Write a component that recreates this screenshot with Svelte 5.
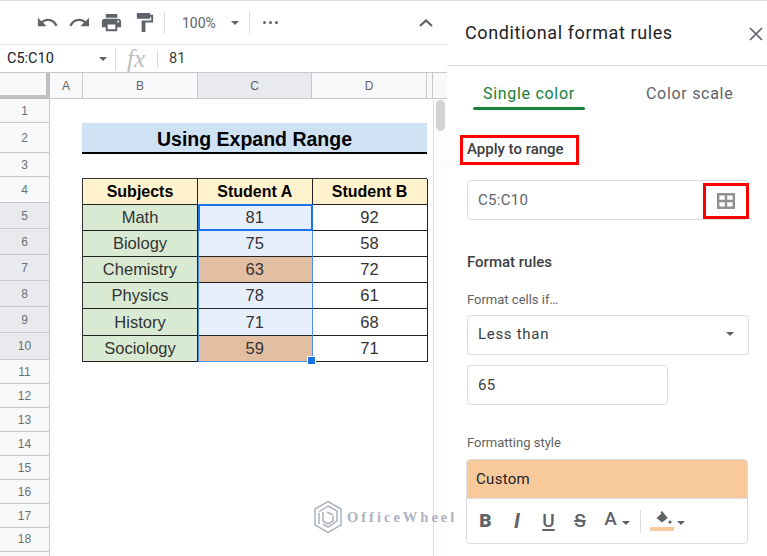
<script>
  const rowHeights = [24, 30, 24, 26, 26, 26, 26, 26, 26, 27, 24, 24, 24, 24, 24, 24, 24, 23.5, 23];
  const rows = [
    { s: 'Math', a: 81, b: 92 },
    { s: 'Biology', a: 75, b: 58 },
    { s: 'Chemistry', a: 63, b: 72, low: true },
    { s: 'Physics', a: 78, b: 61 },
    { s: 'History', a: 71, b: 68 },
    { s: 'Sociology', a: 59, b: 71, low: true }
  ];
  const fmt = ['B', 'I', 'U', 'S'];
</script>

<div class="page">
  <div class="left">
    <div class="toolbar">
      <svg class="ti undo" viewBox="0 0 24 24"><path d="M12.5 8c-2.65 0-5.05.99-6.9 2.6L2 7v9h9l-3.62-3.62c1.39-1.16 3.16-1.88 5.12-1.88 3.54 0 6.55 2.31 7.6 5.5l2.37-.78C21.08 11.03 17.15 8 12.5 8z"/></svg>
      <svg class="ti redo" viewBox="0 0 24 24"><path d="M18.4 10.6C16.55 8.99 14.15 8 11.5 8c-4.65 0-8.58 3.03-9.96 7.22L3.9 16c1.05-3.19 4.05-5.5 7.6-5.5 1.95 0 3.73.72 5.12 1.88L13 16h9V7l-3.6 3.6z"/></svg>
      <svg class="ti print" viewBox="0 0 24 24"><path d="M19 8H5c-1.66 0-3 1.34-3 3v6h4v4h12v-4h4v-6c0-1.66-1.34-3-3-3zm-3 11H8v-5h8v5zm3-7c-.55 0-1-.45-1-1s.45-1 1-1 1 .45 1 1-.45 1-1 1zm-1-9H6v4h12V3z"/></svg>
      <svg class="ti paint" viewBox="0 0 24 24"><path d="M18 4V3c0-.55-.45-1-1-1H5c-.55 0-1 .45-1 1v4c0 .55.45 1 1 1h12c.55 0 1-.45 1-1V6h1v4H9v11c0 .55.45 1 1 1h2c.55 0 1-.45 1-1v-9h8V4h-3z"/></svg>
      <span class="vsep s1"></span>
      <span class="zoomv">100%</span>
      <span class="caret zc"></span>
      <span class="vsep s2"></span>
      <span class="dots"><i></i><i></i><i></i></span>
      <svg class="chev" viewBox="0 0 14 8"><path d="M1 7l6-5.5L13 7" fill="none" stroke="#5f6368" stroke-width="2.2"/></svg>
    </div>

    <div class="fbar">
      <span class="namebox">C5:C10</span>
      <span class="caret nc"></span>
      <span class="vsep f1"></span>
      <span class="fx">fx</span>
      <span class="vsep f2"></span>
      <span class="fval">81</span>
    </div>

    <div class="colhead">
      <div class="corner"></div>
      <div class="ch a">A</div>
      <div class="ch b">B</div>
      <div class="ch c sel">C</div>
      <div class="ch d">D</div>
      <div class="ch e"></div>
    </div>

    <div class="body">
      <div class="rownums">
        {#each rowHeights as h, i}
          <div class="rn" class:sel={i >= 4 && i <= 9} style="height: {h}px">{i < 18 ? i + 1 : ''}</div>
        {/each}
      </div>
      <div class="canvas">
        <div class="title">Using Expand Range</div>
        <div class="table">
          <div class="cell hd">Subjects</div>
          <div class="cell hd">Student A</div>
          <div class="cell hd">Student B</div>
          {#each rows as r, i}
            <div class="cell subj">{r.s}</div>
            <div class="cell val" class:low={r.low} class:active={i === 0}>{r.a}</div>
            <div class="cell">{r.b}</div>
          {/each}
          <div class="range">
            <span class="handle"></span>
          </div>
        </div>
      </div>
      <div class="track"><div class="thumb"></div></div>
    </div>
  </div>

  <aside class="panel">
    <header class="phead">
      <span class="ptitle">Conditional format rules</span>
      <svg class="close" viewBox="0 0 14 14"><path d="M1 1l12 12M13 1L1 13" stroke="#5f6368" stroke-width="1.7" fill="none"/></svg>
    </header>

    <div class="tabs">
      <span class="tab on">Single color</span>
      <span class="tab off">Color scale</span>
    </div>

    <div class="pbody">
      <div class="applybox"><span class="strong">Apply to range</span></div>

      <div class="rangeinput">
        <span class="rv">C5:C10</span>
        <span class="gridbtn">
          <svg viewBox="0 0 18 16" width="18" height="16"><path d="M1.2 1.2h15.6v13.6H1.2zM9 1v14M1 8h16" fill="none" stroke="#8f8f8f" stroke-width="2.4"/></svg>
        </span>
      </div>

      <div class="strong frules">Format rules</div>
      <div class="small fci">Format cells if…</div>
      <div class="sel-input"><span>Less than</span><span class="caret sc"></span></div>
      <div class="num-input">65</div>
      <div class="small fs">Formatting style</div>

      <div class="stylebox">
        <div class="custom">Custom</div>
        <div class="fmtbar">
          {#each fmt as f}
            <span class="fb {f}">{f}</span>
          {/each}
          <span class="fb A">A</span>
          <span class="caret c1"></span>
          <span class="fsep"></span>
          <span class="bucket">
            <svg viewBox="0 0 18 14" width="18" height="14"><path d="M7 0l1.4 1.8L12.8 7 7 11.5 1.5 7 6.5 2.6 5.5 1.2z" fill="#5f6368"/><circle cx="15" cy="11" r="1.6" fill="#5f6368"/></svg>
            <span class="swatch"></span>
          </span>
          <span class="caret c2"></span>
        </div>
      </div>
    </div>
  </aside>

  <div class="watermark">
    <svg viewBox="0 0 30 34" width="30" height="34">
      <g fill="none" stroke="#aeb3bf" stroke-width="1.5">
        <path d="M15 1.5L28 9v16l-13 7.5L2 25V9z"/>
        <path d="M15 6l9 5v10l-9 6-5-3"/>
        <path d="M6 13v11M10 12v9l5 3 5-3v-5"/>
        <path d="M6 12l9-6M14 12l6 3"/>
      </g>
    </svg>
    <span>OfficeWheel</span>
  </div>
</div>

<style>
  :global(body) {
    margin: 0;
    background: #fff;
  }
  .page {
    display: flex;
    width: 767px;
    height: 556px;
    overflow: hidden;
    position: relative;
    font-family: Roboto, "Liberation Sans", sans-serif;
    color: #3c4043;
  }
  .left {
    width: 447px;
    flex: none;
    display: flex;
    flex-direction: column;
  }

  /* toolbar */
  .toolbar {
    height: 43px;
    flex: none;
    border-top: 1px solid #dadce0;
    display: flex;
    align-items: center;
    padding-left: 36px;
    box-sizing: content-box;
  }
  .ti {
    width: 23px;
    height: 23px;
    fill: #5f6368;
    flex: none;
  }
  .redo { margin-left: 9px; }
  .print { margin-left: 9px; }
  .paint { margin-left: 10px; }
  .vsep {
    width: 1px;
    background: #dadce0;
    flex: none;
    align-self: center;
  }
  .s1 { height: 22px; margin-left: 8px; }
  .zoomv {
    font-size: 14px;
    color: #5f6368;
    margin-left: 17px;
  }
  .caret {
    width: 0;
    height: 0;
    flex: none;
    border-left: 4px solid transparent;
    border-right: 4px solid transparent;
    border-top: 4px solid #5f6368;
  }
  .zc { margin-left: 15px; }
  .s2 { height: 22px; margin-left: 10px; }
  .dots {
    display: flex;
    gap: 3px;
    margin-left: 13px;
  }
  .dots i {
    width: 3px;
    height: 3px;
    border-radius: 50%;
    background: #5f6368;
  }
  .chev {
    width: 14px;
    height: 8px;
    margin-left: 141px;
  }

  /* formula bar */
  .fbar {
    height: 27px;
    flex: none;
    border-top: 1px solid #e3e4e6;
    display: flex;
    align-items: center;
    box-sizing: content-box;
    font-size: 14px;
    color: #3c4043;
  }
  .namebox {
    margin-left: 7px;
    width: 92px;
    color: #202124;
    font-size: 14.5px;
  }
  .f1 { height: 22px; margin-left: 8px; }
  .fx {
    font-family: "Liberation Serif", serif;
    font-style: italic;
    font-size: 25px;
    color: #bdbdbd;
    margin-left: 11px;
    width: 30px;
    line-height: 1;
  }
  .f2 { height: 18px; }
  .fval { margin-left: 11px; font-size: 14.5px; }

  /* column header */
  .colhead {
    height: 27px;
    flex: none;
    display: flex;
    border-top: 1px solid #c6c8ca;
    border-bottom: 1px solid #c6c8ca;
    background: #f8f9fa;
    box-sizing: border-box;
    font-size: 12px;
    color: #5f6368;
    font-family: "Liberation Sans", sans-serif;
  }
  .corner {
    width: 50px;
    box-sizing: border-box;
    flex: none;
    border-right: 4px solid #bfc1c3;
    border-bottom: 4px solid #bfc1c3;
    margin-bottom: -1px;
    background-color: #f8f9fa;
  }
  .ch {
    display: flex;
    align-items: center;
    justify-content: center;
    box-sizing: border-box;
    border-right: 1px solid #c6c8ca;
    flex: none;
  }
  .ch.a { width: 33px; }
  .ch.b { width: 115px; }
  .ch.c { width: 114px; }
  .ch.d { width: 115px; }
  .ch.e { width: 6px; }
  .ch.sel { background: #e8eaed; }

  /* body */
  .body {
    display: flex;
    flex: 1;
    min-height: 0;
  }
  .rownums {
    width: 50px;
    flex: none;
    background: #f8f9fa;
    border-right: 1px solid #c6c8ca;
    box-sizing: border-box;
  }
  .rn {
    box-sizing: border-box;
    display: flex;
    align-items: center;
    justify-content: center;
    border-bottom: 1px solid #c6c8ca;
    font-size: 12px;
    color: #6b7075;
    font-family: "Liberation Sans", sans-serif;
  }
  .rn.sel { background: #e8eaed; }
  .canvas {
    width: 383px;
    flex: none;
    padding: 24px 0 0 32px;
    box-sizing: border-box;
  }
  .title {
    width: 345px;
    height: 31px;
    box-sizing: border-box;
    background: #cfe2f3;
    border-bottom: 2px solid #000;
    font: bold 19.5px/32px "Liberation Sans", sans-serif;
    color: #000;
    text-align: center;
  }
  .table {
    margin-top: 24px;
    display: grid;
    position: relative;
    width: 345px;
    grid-template-columns: 115px 114.5px 115px;
    grid-auto-rows: 26.1px;
    font: 16.5px "Liberation Sans", sans-serif;
    color: #333;
    border-top: 1px solid #333;
    border-left: 1px solid #333;
    box-sizing: border-box;
  }
  .cell {
    display: flex;
    align-items: center;
    justify-content: center;
    border-right: 1px solid #222;
    border-bottom: 1px solid #222;
    box-sizing: border-box;
  }
  .hd {
    background: #fff2cc;
    font-weight: bold;
    font-size: 16px;
    color: #000;
  }
  .subj { background: #d9ead3; }
  .val { background: #e6effb; }
  .val.low { background: #e2bfa3; }
  .range {
    position: absolute;
    left: 114.5px;
    top: 25px;
    width: 115px;
    height: 158px;
    border: 1px solid #4d90e8;
    pointer-events: none;
    box-sizing: border-box;
  }
  .range::before {
    content: "";
    position: absolute;
    left: -1px;
    top: -1px;
    width: 115px;
    height: 27px;
    border: 2px solid #1a73e8;
    box-sizing: border-box;
  }
  .handle {
    position: absolute;
    right: -4px;
    bottom: -4px;
    width: 7px;
    height: 7px;
    background: #1a73e8;
    border: 1px solid #fff;
    box-sizing: content-box;
  }
  .track {
    width: 14px;
    flex: none;
    border-left: 1px solid #dadce0;
    background: #fcfcfc;
    box-sizing: border-box;
    padding: 1px 0 0 2px;
  }
  .thumb {
    width: 9px;
    height: 31px;
    border-radius: 5px;
    background: #d4d4d4;
  }

  /* panel */
  .panel {
    width: 320px;
    flex: none;
    box-sizing: border-box;
    background: #fff;
  }
  .phead {
    height: 66px;
    box-sizing: border-box;
    border-top: 1px solid #dadce0;
    border-bottom: 1px solid #dadce0;
    display: flex;
    align-items: center;
    justify-content: space-between;
    padding: 0 4px 1px 18px;
  }
  .ptitle {
    font-size: 18px;
    color: #202124;
    letter-spacing: 0.6px;
  }
  .close { width: 14px; height: 14px; margin-top: 2px; }
  .tabs {
    position: relative;
    height: 46px;
    display: flex;
  }
  .tab {
    font-size: 16px;
    letter-spacing: 0.7px;
    position: absolute;
    top: 18px;
    line-height: 20px;
  }
  .tab.on {
    left: 36px;
    color: #188038;
  }
  .tab.on::after {
    content: "";
    position: absolute;
    left: -10px;
    right: -10px;
    top: 23px;
    height: 3px;
    background: #188038;
    border-radius: 2px;
  }
  .tab.off {
    left: 199px;
    color: #5f6368;
  }
  .pbody {
    padding: 23px 0 0 20px;
  }
  .strong {
    font-size: 15px;
    font-weight: 500;
    color: #3c4043;
    line-height: 18px;
  }
  .applybox {
    width: 119px;
    height: 30px;
    margin-left: -7px;
    box-sizing: border-box;
    border: 3px solid #f00;
    display: flex;
    align-items: center;
    padding-left: 4px;
    padding-bottom: 2px;
  }
  .rangeinput {
    margin-top: 15px;
    width: 282px;
    height: 40px;
    box-sizing: border-box;
    border: 1px solid #dadce0;
    border-radius: 4px;
    display: flex;
    align-items: center;
    justify-content: space-between;
    padding-left: 10px;
    position: relative;
    font-size: 15px;
    letter-spacing: 0.3px;
    color: #5f6368;
  }
  .gridbtn {
    position: absolute;
    right: -1px;
    top: 2px;
    width: 46px;
    height: 36px;
    box-sizing: border-box;
    border: 3px solid #f00;
    display: flex;
    align-items: center;
    justify-content: center;
  }
  .frules { margin-top: 33px; }
  .small {
    font-size: 13px;
    color: #5f6368;
    line-height: 16px;
  }
  .fci { margin-top: 21px; }
  .sel-input {
    margin-top: 7px;
    width: 282px;
    height: 40px;
    box-sizing: border-box;
    border: 1px solid #dadce0;
    border-radius: 4px;
    display: flex;
    align-items: center;
    justify-content: space-between;
    padding: 0 14px 2px 10px;
    font-size: 15px;
    letter-spacing: 0.7px;
  }
  .num-input {
    margin-top: 10px;
    width: 201px;
    height: 40px;
    box-sizing: border-box;
    border: 1px solid #dadce0;
    border-radius: 4px;
    display: flex;
    align-items: center;
    padding-left: 10px;
    font-size: 15px;
    letter-spacing: 0.3px;
  }
  .fs { margin-top: 30px; }
  .stylebox {
    margin-top: 8px;
    margin-left: -1px;
    width: 282px;
    height: 85px;
    box-sizing: border-box;
    border: 1px solid #dadce0;
    border-radius: 4px;
    overflow: hidden;
  }
  .custom {
    height: 38px;
    background: #f8ca9b;
    border-bottom: 1px solid #dadce0;
    box-sizing: content-box;
    display: flex;
    align-items: center;
    padding-left: 9px;
    font-size: 15px;
    letter-spacing: 0.3px;
    color: #202124;
  }
  .fmtbar {
    display: flex;
    align-items: center;
    height: 44px;
    padding-left: 10px;
    color: #5f6368;
  }
  .fb {
    font-size: 19px;
    width: 17px;
    text-align: center;
    margin-right: 14.5px;
    font-weight: 500;
    line-height: 20px;
  }
  .fb.B { font-weight: 900; }
  .fb.I { font-style: italic; font-weight: 700; font-size: 21px; }
  .fb.U { text-decoration: underline; text-decoration-thickness: 2px; text-underline-offset: 2px; }
  .fb.S { text-decoration: line-through; text-decoration-thickness: 2px; }
  .fb.A {
    margin-right: 3px;
    margin-top: -4px;
    margin-left: -1px;
  }
  .c1 { margin-top: 4px; }
  .fsep {
    width: 1px;
    height: 23px;
    background: #dadce0;
    margin-left: 10px;
  }
  .bucket {
    display: flex;
    flex-direction: column;
    align-items: center;
    width: 24px;
    margin-left: 9px;
    gap: 2px;
  }
  .bucket svg { margin-left: 4px; }
  .swatch {
    width: 24px;
    height: 4px;
    background: #f8ca9b;
  }
  .c2 { margin-left: 3px; margin-top: 4px; }

  /* watermark */
  .watermark {
    position: absolute;
    left: 313px;
    top: 500px;
    display: flex;
    align-items: center;
    gap: 4px;
    pointer-events: none;
  }
  .watermark span {
    font: bold 14.5px "Liberation Serif", serif;
    letter-spacing: 3px;
    color: #aeb3bf;
  }
</style>
